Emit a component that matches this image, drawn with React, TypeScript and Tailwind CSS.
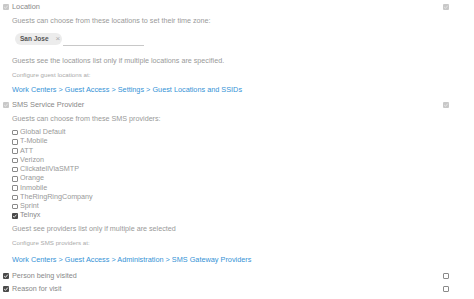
import React from "react";

const font = { fontFamily: '"Liberation Sans", Arial, sans-serif' };

function Box({ kind, small }: { kind: "disabled" | "empty" | "checked"; small?: boolean }) {
  const size = small ? "w-[5.5px] h-[5.5px]" : "w-[6px] h-[6px]";
  if (kind === "empty") {
    return <span className={`inline-block ${small ? "w-[5.5px] h-[5.5px]" : "w-[6px] h-[6px]"} border-[0.8px] border-[#8a8a8a] rounded-[1px] bg-white shrink-0`} />;
  }
  if (kind === "disabled") {
    return (
      <span className="inline-flex items-center justify-center w-[6px] h-[6px] bg-[#c8c8c8] rounded-[1px] shrink-0">
        <svg width="6" height="6" viewBox="0 0 6 6"><path d="M1.2 3.1 L2.5 4.3 L4.8 1.6" stroke="#e8e8e8" strokeWidth="0.9" fill="none" /></svg>
      </span>
    );
  }
  return (
    <span className={`inline-flex items-center justify-center ${size} bg-[#4a4a4a] rounded-[1px] shrink-0`}>
      <svg width="6" height="6" viewBox="0 0 6 6"><path d="M1.2 3.1 L2.5 4.3 L4.8 1.6" stroke="#ffffff" strokeWidth="0.9" fill="none" /></svg>
    </span>
  );
}

const providers: { name: string; checked?: boolean }[] = [
  { name: "Global Default" },
  { name: "T-Mobile" },
  { name: "ATT" },
  { name: "Verizon" },
  { name: "ClickatellViaSMTP" },
  { name: "Orange" },
  { name: "Inmobile" },
  { name: "TheRingRingCompany" },
  { name: "Sprint" },
  { name: "Telnyx", checked: true },
];

export default function App() {
  return (
    <div className="w-[474px] h-[299px] overflow-hidden bg-white text-[7.2px] text-[#999]" style={font}>
      <div className="pl-[3px] pr-[25px]">
        <div className="h-[14px] flex items-center justify-between">
          <div className="flex items-center gap-[3px]">
            <Box kind="disabled" />
            <span className="text-[7.4px] text-[#888]">Location</span>
          </div>
          <Box kind="disabled" />
        </div>
        <div className="pl-[9px]">
          <div className="h-[14px] flex items-center">Guests can choose from these locations to set their time zone:</div>
          <div className="h-[22px] flex items-center">
            <div className="flex items-center">
              <span className="ml-[3px] h-[12px] w-[47px] rounded-full bg-[#ececec] flex items-center pl-[5px] gap-[7px]">
                <span className="text-[#555] text-[6.5px] font-bold">San Jose</span>
                <span className="text-[#aaa] text-[8px] leading-none">×</span>
              </span>
              <span className="ml-[1px] mt-[12px] w-[81px] h-[1px] bg-[#c8c8c8]" />
            </div>
          </div>
          <div className="h-[4px]" />
          <div className="h-[14px] flex items-center">Guests see the locations list only if multiple locations are specified.</div>
          <div className="h-[14px] flex items-center text-[6.2px] text-[#aaa]">Configure guest locations at:</div>
          <div className="h-[16px] flex items-center text-[7.3px] text-[#3593d6]">Work Centers &gt; Guest Access &gt; Settings &gt; Guest Locations and SSIDs</div>
        </div>
        <div className="h-[14px] flex items-center justify-between">
          <div className="flex items-center gap-[3px]">
            <Box kind="disabled" />
            <span className="text-[7.4px] text-[#888]">SMS Service Provider</span>
          </div>
          <Box kind="disabled" />
        </div>
        <div className="pl-[9px]">
          <div className="h-[14px] flex items-center">Guests can choose from these SMS providers:</div>
          <div className="mt-[2px]">
            {providers.map((p) => (
              <div key={p.name} className="h-[9.25px] flex items-center gap-[2.5px]">
                <Box kind={p.checked ? "checked" : "empty"} small />
                <span className={p.checked ? "text-[#888]" : ""}>{p.name}</span>
              </div>
            ))}
          </div>
          <div className="mt-[1.5px] h-[14px] flex items-center">Guest see providers list only if multiple are selected</div>
          <div className="h-[14px] flex items-center text-[6.2px] text-[#aaa]">Configure SMS providers at:</div>
          <div className="h-[20px] flex items-center text-[7.3px] text-[#3593d6]">Work Centers &gt; Guest Access &gt; Administration &gt; SMS Gateway Providers</div>
        </div>
        <div className="h-[12px] flex items-center justify-between">
          <div className="flex items-center gap-[3px]">
            <Box kind="checked" />
            <span className="text-[#888]">Person being visited</span>
          </div>
          <Box kind="empty" />
        </div>
        <div className="h-[14px] flex items-center justify-between">
          <div className="flex items-center gap-[3px]">
            <Box kind="checked" />
            <span className="text-[#888]">Reason for visit</span>
          </div>
          <Box kind="empty" />
        </div>
      </div>
    </div>
  );
}
